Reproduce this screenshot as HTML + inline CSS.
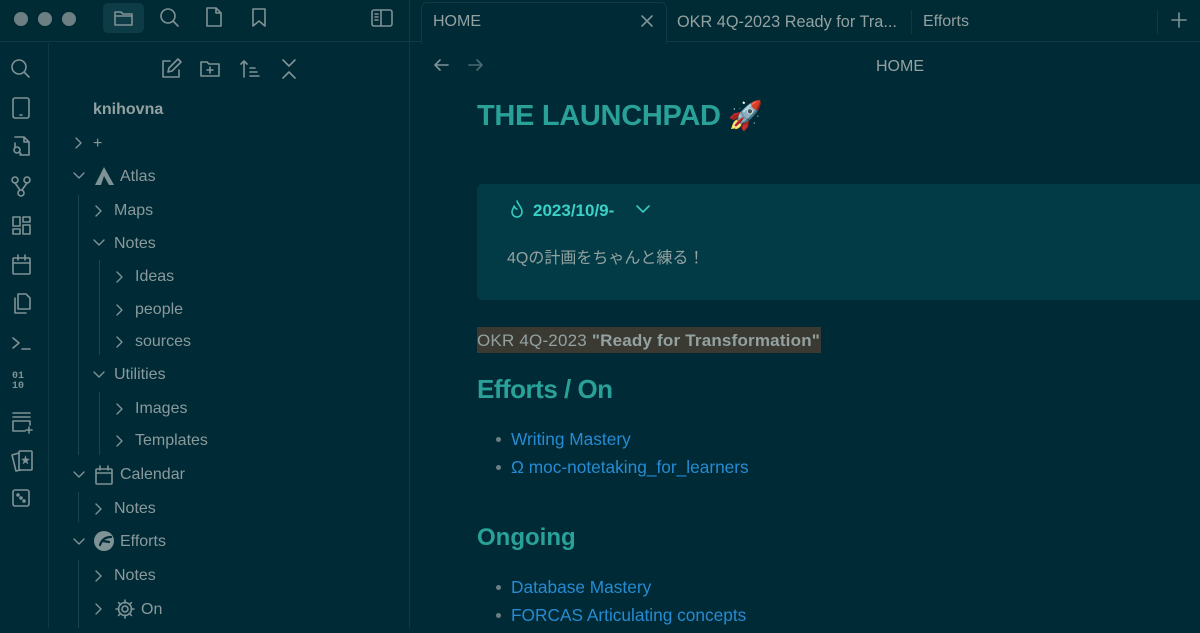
<!DOCTYPE html>
<html><head><meta charset="utf-8"><style>
*{margin:0;padding:0;box-sizing:border-box}
body{width:1200px;height:628px;overflow:hidden;background:#002b36;font-family:"Liberation Sans","Noto Sans CJK JP",sans-serif;color:#839496;position:relative}
.a{position:absolute}
svg{fill:none;stroke:#7f9295;stroke-width:1.6;stroke-linecap:round;stroke-linejoin:round}
.tree div{position:absolute;font-size:16px;color:#8a9a9c;white-space:nowrap}
.vl{position:absolute;width:1px;background:#1d4550}
ul{list-style:none}
li{position:relative;padding-left:34px;font-size:17.3px;color:#268bd2;height:28px}
li:before{content:"";position:absolute;left:19px;top:8px;width:5px;height:5px;border-radius:50%;background:#6d7f82}
</style></head><body>
<div class="a" style="left:0;top:0;width:410px;height:42px;background:#002a34;border-bottom:1px solid #0c3a45"></div>
<div class="a" style="left:14px;top:12px;width:14px;height:14px;border-radius:50%;background:#6c7f83"></div>
<div class="a" style="left:38px;top:12px;width:14px;height:14px;border-radius:50%;background:#6c7f83"></div>
<div class="a" style="left:62px;top:12px;width:14px;height:14px;border-radius:50%;background:#6c7f83"></div>
<div class="a" style="left:103px;top:3px;width:41px;height:30px;border-radius:5px;background:#0d3c46"></div>
<svg class="a" style="left:113px;top:8px" width="22" height="20"><path d="M2 4h6l2 2h9v11H2z M2 8h17"/></svg>
<svg class="a" style="left:159px;top:7px" width="22" height="22"><circle cx="9" cy="9" r="7"/><path d="M14 14l5 5"/></svg>
<svg class="a" style="left:204px;top:6px" width="20" height="22"><path d="M3 2h9l5 5v13H3z M12 2v5h5"/></svg>
<svg class="a" style="left:250px;top:7px" width="18" height="22"><path d="M3 2h12v17l-6-5-6 5z"/></svg>
<svg class="a" style="left:370px;top:8px" width="24" height="20"><rect x="2" y="2" width="20" height="16" rx="2"/><path d="M11 2v16M5 6h3M5 9h3M5 12h3"/></svg>
<div class="a" style="left:48px;top:43px;width:1px;height:585px;background:#0c3a45"></div>
<div class="a" style="left:409px;top:0;width:1px;height:628px;background:#0c3a45"></div>
<svg class="a" style="left:10px;top:58px" width="22" height="22"><circle cx="9" cy="9" r="7"/><path d="M14 14l5 5"/></svg>
<svg class="a" style="left:10px;top:96px" width="22" height="24"><rect x="3" y="2" width="16" height="20" rx="2"/><path d="M10 19h2"/></svg>
<svg class="a" style="left:10px;top:135px" width="22" height="24"><path d="M5 2h9l5 5v13H10 M14 2v5h5 M5 8v4"/><circle cx="7" cy="15" r="3"/><path d="M9 17l2 2"/></svg>
<svg class="a" style="left:10px;top:175px" width="22" height="24"><circle cx="5" cy="5" r="3"/><circle cx="17" cy="5" r="3"/><circle cx="11" cy="18" r="3"/><path d="M5 8l5 7M17 8l-5 7"/></svg>
<svg class="a" style="left:10px;top:214px" width="22" height="22"><rect x="3" y="3" width="7" height="9"/><rect x="13" y="3" width="7" height="5"/><rect x="3" y="15" width="7" height="5"/><rect x="13" y="11" width="7" height="9"/></svg>
<svg class="a" style="left:10px;top:253px" width="22" height="24"><rect x="3" y="5" width="17" height="16" rx="1"/><path d="M3 10h17M8 2v5M15 2v5"/></svg>
<svg class="a" style="left:10px;top:292px" width="22" height="24"><path d="M8 2h8l4 4v11H8z M5 6v15h11"/></svg>
<svg class="a" style="left:10px;top:332px" width="24" height="22"><path d="M3 6l6 5-6 5M12 17h8"/></svg>
<div class="a" style="left:12px;top:372px;font-size:10px;line-height:10px;color:#7f9295;font-family:'Liberation Mono',monospace;font-weight:bold">01<br>10</div>
<svg class="a" style="left:10px;top:410px" width="24" height="24"><path d="M3 3h17M3 7h17M3 11v10h12M3 11h17v4M19 17v6M16 20h6"/></svg>
<svg class="a" style="left:9px;top:448px" width="26" height="26"><rect x="10" y="3" width="13" height="19" rx="1"/><path d="M10 5l-7 2 4 16 5-1"/><path d="M16.5 8l1 3h3l-2.5 2 1 3-2.5-2-2.5 2 1-3-2.5-2h3z" fill="#7f9295" stroke-width="0.5"/></svg>
<svg class="a" style="left:10px;top:487px" width="22" height="22"><rect x="3" y="3" width="16" height="16" rx="2"/><circle cx="8" cy="8" r="1" fill="#7f9295"/><circle cx="11" cy="11" r="1" fill="#7f9295"/><circle cx="14" cy="14" r="1" fill="#7f9295"/></svg>
<svg class="a" style="left:160px;top:58px" width="22" height="22"><path d="M10 3H3v16h16v-7 M8 14l1-4 9-9 3 3-9 9z"/></svg>
<svg class="a" style="left:199px;top:58px" width="24" height="22"><path d="M2 4h6l2 2h10v12H2z M11 9v6M8 12h6"/></svg>
<svg class="a" style="left:239px;top:58px" width="24" height="22"><path d="M5 19V3M2 6l3-3 3 3M11 10h5M11 14h7M11 18h9"/></svg>
<svg class="a" style="left:280px;top:58px" width="18" height="22"><path d="M3 2l6 6 6-6M3 20l6-6 6 6"/></svg>
<div class="tree">
<div style="left:93px;top:101px;font-weight:bold;color:#93a1a1">knihovna</div>
<div style="left:93px;top:135px">+</div>
<div style="left:120px;top:168px">Atlas</div>
<div style="left:114px;top:202px">Maps</div>
<div style="left:114px;top:235px">Notes</div>
<div style="left:135px;top:268px">Ideas</div>
<div style="left:135px;top:301px">people</div>
<div style="left:135px;top:333px">sources</div>
<div style="left:114px;top:366px">Utilities</div>
<div style="left:135px;top:400px">Images</div>
<div style="left:135px;top:432px">Templates</div>
<div style="left:120px;top:466px">Calendar</div>
<div style="left:114px;top:500px">Notes</div>
<div style="left:120px;top:533px">Efforts</div>
<div style="left:114px;top:567px">Notes</div>
<div style="left:141px;top:601px">On</div>
</div>
<svg class="a" style="left:73px;top:136px;stroke-width:1.4" width="10" height="14"><path d="M3 2l5 5-5 5"/></svg>
<svg class="a" style="left:72px;top:171px;stroke-width:1.4" width="14" height="10"><path d="M2 2l5 5 5-5"/></svg>
<svg class="a" style="left:93px;top:204px;stroke-width:1.4" width="10" height="14"><path d="M3 2l5 5-5 5"/></svg>
<svg class="a" style="left:92px;top:238px;stroke-width:1.4" width="14" height="10"><path d="M2 2l5 5 5-5"/></svg>
<svg class="a" style="left:114px;top:270px;stroke-width:1.4" width="10" height="14"><path d="M3 2l5 5-5 5"/></svg>
<svg class="a" style="left:114px;top:303px;stroke-width:1.4" width="10" height="14"><path d="M3 2l5 5-5 5"/></svg>
<svg class="a" style="left:114px;top:335px;stroke-width:1.4" width="10" height="14"><path d="M3 2l5 5-5 5"/></svg>
<svg class="a" style="left:92px;top:370px;stroke-width:1.4" width="14" height="10"><path d="M2 2l5 5 5-5"/></svg>
<svg class="a" style="left:114px;top:402px;stroke-width:1.4" width="10" height="14"><path d="M3 2l5 5-5 5"/></svg>
<svg class="a" style="left:114px;top:434px;stroke-width:1.4" width="10" height="14"><path d="M3 2l5 5-5 5"/></svg>
<svg class="a" style="left:72px;top:470px;stroke-width:1.4" width="14" height="10"><path d="M2 2l5 5 5-5"/></svg>
<svg class="a" style="left:93px;top:502px;stroke-width:1.4" width="10" height="14"><path d="M3 2l5 5-5 5"/></svg>
<svg class="a" style="left:72px;top:537px;stroke-width:1.4" width="14" height="10"><path d="M2 2l5 5 5-5"/></svg>
<svg class="a" style="left:93px;top:569px;stroke-width:1.4" width="10" height="14"><path d="M3 2l5 5-5 5"/></svg>
<svg class="a" style="left:93px;top:602px;stroke-width:1.4" width="10" height="14"><path d="M3 2l5 5-5 5"/></svg>
<svg class="a" style="left:93px;top:165px;stroke:none;fill:#7f9295" width="22" height="22"><path d="M11 2l10 18h-5L11 11 8 20H2z"/></svg>
<svg class="a" style="left:94px;top:464px" width="20" height="22"><rect x="2" y="5" width="16" height="15" rx="1"/><path d="M2 9h16M6 2v4M14 2v4"/></svg>
<div class="a" style="left:94px;top:531px;width:20px;height:20px;border-radius:50%;background:#7f9295"></div>
<svg class="a" style="left:98px;top:535px;stroke:#002b36;stroke-width:2.2" width="14" height="12"><path d="M2 10c2-6 6-8 11-8M5 6l6 1"/></svg>
<svg class="a" style="left:114px;top:598px" width="22" height="22"><circle cx="11" cy="11" r="3"/><path d="M11 2v3M11 17v3M2 11h3M17 11h3M4.6 4.6l2.1 2.1M15.3 15.3l2.1 2.1M4.6 17.4l2.1-2.1M15.3 6.7l2.1-2.1"/><circle cx="11" cy="11" r="6.5"/></svg>
<div class="vl" style="left:78px;top:195px;height:260px"></div>
<div class="vl" style="left:99px;top:260px;height:95px"></div>
<div class="vl" style="left:99px;top:392px;height:63px"></div>
<div class="vl" style="left:78px;top:492px;height:30px"></div>
<div class="vl" style="left:78px;top:560px;height:68px"></div>
<div class="a" style="left:410px;top:0;width:790px;height:42px;background:#002a34;border-bottom:1px solid #0c3a45"></div>
<div class="a" style="left:421px;top:2px;width:246px;height:42px;background:#002b36;border:1px solid #0c3a45;border-bottom:none;border-radius:6px 6px 0 0"></div>
<div class="a" style="left:433px;top:13px;font-size:16px;color:#93a1a1">HOME</div>
<svg class="a" style="left:639px;top:13px" width="16" height="16"><path d="M3 3l10 10M13 3L3 13"/></svg>
<div class="a" style="left:677px;top:13px;font-size:16.3px;color:#93a1a1">OKR 4Q-2023 Ready for Tra...</div>
<div class="a" style="left:911px;top:10px;width:1px;height:24px;background:#0c3a45"></div>
<div class="a" style="left:923px;top:13px;font-size:16px;color:#93a1a1">Efforts</div>
<div class="a" style="left:1157px;top:10px;width:1px;height:24px;background:#0c3a45"></div>
<svg class="a" style="left:1170px;top:11px" width="18" height="18"><path d="M9 2v14M2 9h14"/></svg>
<svg class="a" style="left:432px;top:57px" width="18" height="16"><path d="M16 8H3M8 3L3 8l5 5"/></svg>
<svg class="a" style="left:467px;top:57px;stroke:#4c6a70" width="18" height="16"><path d="M2 8h13M10 3l5 5-5 5"/></svg>
<div class="a" style="left:876px;top:58px;font-size:16px;color:#93a1a1">HOME</div>
<div class="a" style="left:477px;top:99px;font-size:29px;font-weight:bold;color:#2aa198;letter-spacing:-0.3px">THE LAUNCHPAD <span style="font-size:28px">🚀</span></div>
<div class="a" style="left:477px;top:184px;width:723px;height:116px;background:#023b45;border-radius:5px 0 0 5px"></div>
<svg class="a" style="left:508px;top:199px;stroke:#35c9c0" width="18" height="22"><path d="M9 2c1 4 5 6 5 11a5 5 0 0 1-10 0c0-3 2-4 2-6 1 2 2 3 3 3"/></svg>
<div class="a" style="left:533px;top:201px;font-size:17px;font-weight:bold;color:#3ad0c6">2023/10/9-</div>
<svg class="a" style="left:635px;top:203px;stroke:#35c9c0" width="16" height="12"><path d="M2 3l6 6 6-6"/></svg>
<div class="a" style="left:507px;top:244px;font-size:16px;color:#93a1a1">4Qの計画をちゃんと練る！</div>
<div class="a" style="left:477px;top:327px;height:26px;width:344px;background:#3a3a32"></div>
<div class="a" style="left:477px;top:331px;font-size:17px;color:#93a1a1;letter-spacing:0.2px">OKR 4Q-2023 <b>"Ready for Transformation"</b></div>
<div class="a" style="left:477px;top:374px;font-size:26px;font-weight:bold;color:#2aa198;letter-spacing:-0.5px">Efforts / On</div>
<ul class="a" style="left:477px;top:429px"><li>Writing Mastery</li><li>Ω moc-notetaking_for_learners</li></ul>
<div class="a" style="left:477px;top:524px;font-size:24px;font-weight:bold;color:#2aa198">Ongoing</div>
<ul class="a" style="left:477px;top:577px"><li>Database Mastery</li><li>FORCAS Articulating concepts</li></ul>
</body></html>
